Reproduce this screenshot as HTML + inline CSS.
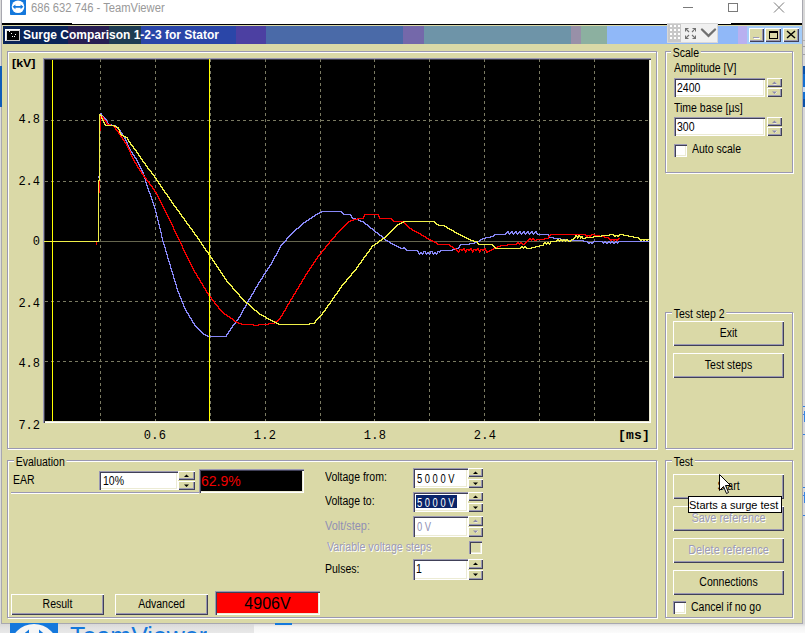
<!DOCTYPE html>
<html><head><meta charset="utf-8"><style>
html,body{margin:0;padding:0;}
body{width:805px;height:633px;overflow:hidden;position:relative;background:#fff;}
body div, body svg{position:absolute;}
.t,.tc,.tb,.m,.mb{white-space:nowrap;font-family:"Liberation Sans",sans-serif;font-size:12px;color:#000;line-height:14px;}
.t{transform:scaleX(0.875);transform-origin:left top;}
.tc{text-align:center;}
.tc{transform:scaleX(0.875);transform-origin:center top;}
.tb{font-weight:bold;}
.m{font-family:"Liberation Mono",monospace;font-size:11px;}
.mb{font-family:"Liberation Mono",monospace;font-size:12px;font-weight:bold;}
</style></head><body>
<div style="left:0px;top:0px;width:805px;height:23px;background:#ffffff;"></div>
<svg style="left:10px;top:0px" width="16" height="15" viewBox="0 0 16 15"><rect x="0" y="-1" width="16" height="16" rx="0.8" fill="#1478dc"/><circle cx="8" cy="6.8" r="6.3" fill="#fff"/><path d="M2.6 6.8 L5.4 4.4 V5.9 H10.6 V4.4 L13.4 6.8 L10.6 9.2 V7.7 H5.4 V9.2 Z" fill="#1478dc"/></svg>
<div class="t" style="left:31px;top:1px;color:#999999;font-size:12px;transform:scaleX(0.935);transform-origin:left top">686 632 746 - TeamViewer</div>
<div style="left:683px;top:7px;width:10px;height:1px;background:#7a7a7a;"></div>
<div style="left:728px;top:3px;width:10px;height:9px;border:1px solid #7a7a7a;box-sizing:border-box"></div>
<svg style="left:773px;top:2px" width="12" height="11" viewBox="0 0 12 11"><path d="M1 0.5 L11 10.5 M11 0.5 L1 10.5" stroke="#7a7a7a" stroke-width="1"/></svg>
<div style="left:0px;top:0px;width:1px;height:633px;background:#dcdcdc;"></div>
<div style="left:1px;top:0px;width:1px;height:624px;background:#a8a8b0;"></div>
<div style="left:0px;top:66px;width:2px;height:41px;background:#0f5cb8;"></div>
<div style="left:802px;top:0px;width:1px;height:624px;background:#a8a8b0;"></div>
<div style="left:803px;top:0px;width:2px;height:633px;background:#d8d8d8;"></div>
<div style="left:803px;top:66px;width:2px;height:41px;background:#0a52a8;"></div>
<div style="left:803px;top:74px;width:2px;height:14px;background:#1270d0;"></div>
<div style="left:803px;top:87px;width:2px;height:5px;background:#c8dcf0;"></div>
<div style="left:803px;top:92px;width:2px;height:7px;background:#1270d0;"></div>
<div style="left:803px;top:46px;width:2px;height:1px;background:#a0a0a0;"></div>
<div style="left:803px;top:54px;width:2px;height:1px;background:#a0a0a0;"></div>
<div style="left:803px;top:40px;width:2px;height:1px;background:#b0b0b0;"></div>
<div style="left:803px;top:406px;width:2px;height:1px;background:#3080e0;"></div>
<div style="left:803px;top:434px;width:2px;height:1px;background:#3080e0;"></div>
<div style="left:803px;top:487px;width:2px;height:1px;background:#3080e0;"></div>
<div style="left:803px;top:515px;width:2px;height:1px;background:#3080e0;"></div>
<div style="left:804px;top:411px;width:1px;height:11px;background:#3a86e0;"></div>
<div style="left:803px;top:414px;width:2px;height:1px;background:#3a86e0;"></div>
<div style="left:804px;top:492px;width:1px;height:11px;background:#3a86e0;"></div>
<div style="left:803px;top:495px;width:2px;height:1px;background:#3a86e0;"></div>
<div style="left:2px;top:23px;width:70px;height:2px;background:#000;"></div>
<div style="left:72px;top:24px;width:659px;height:1px;background:#000;"></div>
<div style="left:731px;top:23px;width:71px;height:2px;background:#000;"></div>
<div style="left:2px;top:25px;width:800px;height:598px;background:#dad9a7;"></div>
<div style="left:1px;top:623px;width:802px;height:1px;background:#a8a8b0;"></div>
<div style="left:3px;top:26px;width:65px;height:18px;background:#0a2458;"></div>
<div style="left:68px;top:26px;width:41px;height:18px;background:#281e52;"></div>
<div style="left:109px;top:26px;width:32px;height:18px;background:#1e3c52;"></div>
<div style="left:141px;top:26px;width:95px;height:18px;background:#2a46a8;"></div>
<div style="left:236px;top:26px;width:30px;height:18px;background:#4c40a2;"></div>
<div style="left:266px;top:26px;width:137px;height:18px;background:#4a6aa8;"></div>
<div style="left:403px;top:26px;width:21px;height:18px;background:#7468aa;"></div>
<div style="left:424px;top:26px;width:147px;height:18px;background:#6e94a8;"></div>
<div style="left:571px;top:26px;width:10px;height:18px;background:#9890a8;"></div>
<div style="left:581px;top:26px;width:26px;height:18px;background:#8cb0a0;"></div>
<div style="left:607px;top:26px;width:131px;height:18px;background:#90b8f8;"></div>
<div style="left:738px;top:26px;width:9px;height:18px;background:#b8b0f0;"></div>
<div style="left:747px;top:26px;width:55px;height:18px;background:#a4ccf8;"></div>
<div style="left:5px;top:29px;width:15px;height:12px;background:#000;box-shadow:inset 1px 1px 0 #fff,inset -1px -1px 0 #c8c8c8,inset 2px 2px 0 #e0e0e0"></div>
<svg style="left:5px;top:29px" width="15" height="12"><g fill="#fff"><rect x="4" y="2" width="1" height="1"/><rect x="6" y="4" width="1" height="1"/><rect x="10" y="5" width="1" height="1"/><rect x="7" y="7" width="1" height="1"/><rect x="9" y="7" width="1" height="1"/></g></svg>
<div class="tb" style="left:23px;top:28px;color:#fff">Surge Comparison 1-2-3 for Stator</div>
<div style="left:667px;top:23px;width:51px;height:20px;background:#d8d8d8;"></div>
<div style="left:668px;top:24px;width:49px;height:18px;background:#f0f0f0;"></div>
<div style="left:668px;top:24px;width:13px;height:18px;background:#c8c8c8;"></div>
<svg style="left:668px;top:24px" width="13" height="18"><g fill="#fff"><rect x="2" y="1" width="2" height="2"/><rect x="2" y="5" width="2" height="2"/><rect x="2" y="9" width="2" height="2"/><rect x="2" y="13" width="2" height="2"/><rect x="6" y="1" width="2" height="2"/><rect x="6" y="5" width="2" height="2"/><rect x="6" y="9" width="2" height="2"/><rect x="6" y="13" width="2" height="2"/><rect x="10" y="1" width="2" height="2"/><rect x="10" y="5" width="2" height="2"/><rect x="10" y="9" width="2" height="2"/><rect x="10" y="13" width="2" height="2"/></g></svg>
<svg style="left:685px;top:28px" width="11" height="11" viewBox="0 0 11 11"><g stroke="#707070" stroke-width="1.1" fill="none"><path d="M0.5 3.5 V0.5 H3.5 M1 1 L4 4"/><path d="M10.5 3.5 V0.5 H7.5 M10 1 L7 4"/><path d="M0.5 7.5 V10.5 H3.5 M1 10 L4 7"/><path d="M10.5 7.5 V10.5 H7.5 M10 10 L7 7"/></g></svg>
<svg style="left:700px;top:28px" width="17" height="10" viewBox="0 0 17 10"><path d="M2 1.5 L8.5 7.8 L15 1.5" stroke="#707070" stroke-width="2.3" fill="none" stroke-linecap="round"/></svg>
<div style="left:749px;top:28px;width:15px;height:14px;background:#dad9a7;box-shadow:inset 1px 1px 0 #ffffff,inset -1px -1px 0 #404058,inset -2px -2px 0 #9a98b2"></div>
<div style="left:765px;top:28px;width:16px;height:14px;background:#dad9a7;box-shadow:inset 1px 1px 0 #ffffff,inset -1px -1px 0 #404058,inset -2px -2px 0 #9a98b2"></div>
<div style="left:783px;top:28px;width:16px;height:14px;background:#dad9a7;box-shadow:inset 1px 1px 0 #ffffff,inset -1px -1px 0 #404058,inset -2px -2px 0 #9a98b2"></div>
<div style="left:754px;top:38px;width:6px;height:1px;background:#fff;"></div>
<div style="left:753px;top:37px;width:6px;height:1px;background:#9c9ab8;"></div>
<div style="left:769px;top:31px;width:9px;height:8px;border:1px solid #000;border-top-width:2px;box-sizing:border-box"></div>
<svg style="left:786px;top:30px" width="10" height="9" viewBox="0 0 10 9"><path d="M1 1 L9 8 M9 1 L1 8" stroke="#000" stroke-width="1.5"/></svg>
<div style="left:8px;top:52px;width:650px;height:398px;border:1px solid #ffffff;box-sizing:border-box"></div>
<div style="left:7px;top:51px;width:650px;height:398px;border:1px solid #9a98b2;box-sizing:border-box"></div>
<div class="tb" style="left:12px;top:57px;color:#000;font-size:11.5px;line-height:13px;transform:scaleX(1.08);transform-origin:left top">[kV]</div>
<div style="left:43px;top:58px;width:608px;height:365px;background:#000;box-shadow:inset 1px 1px 0 #9a98b2,inset 2px 2px 0 #3c3c48,inset -1px -1px 0 #ffffff,inset -2px -2px 0 #ecebd4"></div>
<div class="m" style="left:0px;top:113px;width:40px;text-align:right;font-size:12px">4.8</div>
<div class="m" style="left:0px;top:175px;width:40px;text-align:right;font-size:12px">2.4</div>
<div class="m" style="left:0px;top:235px;width:40px;text-align:right;font-size:12px">0</div>
<div class="m" style="left:0px;top:297px;width:40px;text-align:right;font-size:12px">2.4</div>
<div class="m" style="left:0px;top:357px;width:40px;text-align:right;font-size:12px">4.8</div>
<div class="m" style="left:0px;top:419px;width:40px;text-align:right;font-size:12px">7.2</div>
<div class="m" style="left:135px;top:429px;width:40px;text-align:center;font-size:12px;letter-spacing:0.3px">0.6</div>
<div class="m" style="left:245px;top:429px;width:40px;text-align:center;font-size:12px;letter-spacing:0.3px">1.2</div>
<div class="m" style="left:355px;top:429px;width:40px;text-align:center;font-size:12px;letter-spacing:0.3px">1.8</div>
<div class="m" style="left:465px;top:429px;width:40px;text-align:center;font-size:12px;letter-spacing:0.3px">2.4</div>
<div class="mb" style="left:618px;top:429px;font-size:13px;letter-spacing:0.2px">[ms]</div>
<div style="left:44px;top:59px;width:605px;height:362px;overflow:hidden"><div style="position:absolute;left:-44px;top:-59px"><svg style="left:0;top:0" width="805" height="633"><g stroke="#7a7a62" stroke-width="1" stroke-dasharray="3 3" shape-rendering="crispEdges"><line x1="100.5" y1="59" x2="100.5" y2="421"/><line x1="155.5" y1="59" x2="155.5" y2="421"/><line x1="210.5" y1="59" x2="210.5" y2="421"/><line x1="265.5" y1="59" x2="265.5" y2="421"/><line x1="320.5" y1="59" x2="320.5" y2="421"/><line x1="374.5" y1="59" x2="374.5" y2="421"/><line x1="429.5" y1="59" x2="429.5" y2="421"/><line x1="484.5" y1="59" x2="484.5" y2="421"/><line x1="539.5" y1="59" x2="539.5" y2="421"/><line x1="594.5" y1="59" x2="594.5" y2="421"/><line x1="45" y1="120.5" x2="649" y2="120.5"/><line x1="45" y1="181.5" x2="649" y2="181.5"/><line x1="45" y1="301.5" x2="649" y2="301.5"/><line x1="45" y1="361.5" x2="649" y2="361.5"/></g><line x1="44" y1="241.5" x2="649" y2="241.5" stroke="#66664e" stroke-width="1" shape-rendering="crispEdges"/><path d="M100.5 112.5 V113.5 H101.5 V115.5 V115.5 H102.5 V116.5 V116.5 H103.5 V117.5 V117.5 H104.5 V118.5 V118.5 H105.5 V119.5 V119.5 H106.5 V120.5 V121.5 H107.5 V122.5 V123.5 H108.5 V124.5 H109.5 H110.5 V124.5 H111.5 V125.5 H112.5 H113.5 H114.5 V125.5 H115.5 V126.5 V126.5 H116.5 V127.5 V127.5 H117.5 V128.5 V128.5 H118.5 V129.5 V129.5 H119.5 V130.5 V130.5 H120.5 V131.5 V132.5 H121.5 V133.5 V133.5 H122.5 V134.5 V135.5 H123.5 V136.5 V136.5 H124.5 V137.5 V138.5 H125.5 V139.5 V140.5 H126.5 V141.5 V142.5 H127.5 V144.5 V145.5 H128.5 V146.5 V147.5 H129.5 V148.5 V149.5 H130.5 V151.5 V151.5 H131.5 V152.5 V152.5 H132.5 V153.5 V154.5 H133.5 V155.5 V155.5 H134.5 V156.5 V157.5 H135.5 V158.5 V158.5 H136.5 V159.5 V160.5 H137.5 V161.5 V162.5 H138.5 V163.5 V164.5 H139.5 V165.5 V166.5 H140.5 V167.5 V168.5 H141.5 V169.5 V170.5 H142.5 V171.5 V172.5 H143.5 V173.5 V175.5 H144.5 V177.5 V178.5 H145.5 V180.5 V182.5 H146.5 V184.5 V185.5 H147.5 V187.5 V188.5 H148.5 V190.5 V191.5 H149.5 V192.5 V193.5 H150.5 V195.5 V196.5 H151.5 V198.5 V199.5 H152.5 V201.5 V202.5 H153.5 V204.5 V205.5 H154.5 V206.5 V208.5 H155.5 V210.5 V212.5 H156.5 V214.5 V216.5 H157.5 V218.5 V220.5 H158.5 V222.5 V224.5 H159.5 V226.5 V228.5 H160.5 V230.5 V232.5 H161.5 V235.5 V237.5 H162.5 V239.5 V241.5 H163.5 V243.5 V244.5 H164.5 V246.5 V247.5 H165.5 V249.5 V251.5 H166.5 V253.5 V254.5 H167.5 V256.5 V258.5 H168.5 V260.5 V261.5 H169.5 V263.5 V264.5 H170.5 V266.5 V268.5 H171.5 V270.5 V271.5 H172.5 V273.5 V274.5 H173.5 V276.5 V278.5 H174.5 V280.5 V281.5 H175.5 V283.5 V284.5 H176.5 V286.5 V288.5 H177.5 V290.5 V291.5 H178.5 V292.5 V293.5 H179.5 V295.5 V296.5 H180.5 V297.5 V298.5 H181.5 V300.5 V301.5 H182.5 V302.5 V303.5 H183.5 V305.5 V306.5 H184.5 V307.5 V308.5 H185.5 V309.5 V310.5 H186.5 V311.5 V312.5 H187.5 V313.5 V313.5 H188.5 V314.5 V315.5 H189.5 V316.5 V317.5 H190.5 V318.5 V318.5 H191.5 V319.5 V320.5 H192.5 V321.5 V322.5 H193.5 V323.5 V323.5 H194.5 V324.5 V325.5 H195.5 V326.5 V326.5 H196.5 V327.5 V327.5 H197.5 V328.5 V328.5 H198.5 V329.5 V329.5 H199.5 V330.5 V330.5 H200.5 V331.5 V331.5 H201.5 V332.5 V332.5 H202.5 V333.5 V333.5 H203.5 V334.5 H204.5 V334.5 H205.5 V335.5 H206.5 V335.5 H207.5 V336.5 H208.5 H209.5 H210.5 H211.5 H212.5 H213.5 H214.5 H215.5 H216.5 H217.5 H218.5 H219.5 H220.5 H221.5 H222.5 H223.5 H224.5 H225.5 V336.5 H226.5 V335.5 V334.5 H227.5 V333.5 V333.5 H228.5 V332.5 V331.5 H229.5 V330.5 V330.5 H230.5 V329.5 V328.5 H231.5 V327.5 V327.5 H232.5 V326.5 V325.5 H233.5 V324.5 V324.5 H234.5 V323.5 V323.5 H235.5 V322.5 V321.5 H236.5 V320.5 V320.5 H237.5 V319.5 V319.5 H238.5 V318.5 V317.5 H239.5 V316.5 V316.5 H240.5 V315.5 V314.5 H241.5 V313.5 V312.5 H242.5 V311.5 V310.5 H243.5 V309.5 V308.5 H244.5 V307.5 V307.5 H245.5 V306.5 V305.5 H246.5 V304.5 V303.5 H247.5 V302.5 V301.5 H248.5 V300.5 V299.5 H249.5 V298.5 V298.5 H250.5 V297.5 V296.5 H251.5 V295.5 V294.5 H252.5 V293.5 V293.5 H253.5 V292.5 V291.5 H254.5 V290.5 V289.5 H255.5 V288.5 V287.5 H256.5 V286.5 V286.5 H257.5 V285.5 V284.5 H258.5 V283.5 V282.5 H259.5 V281.5 V281.5 H260.5 V280.5 V279.5 H261.5 V278.5 V278.5 H262.5 V277.5 V276.5 H263.5 V275.5 V274.5 H264.5 V273.5 V273.5 H265.5 V272.5 V271.5 H266.5 V270.5 V270.5 H267.5 V269.5 V268.5 H268.5 V267.5 V267.5 H269.5 V266.5 V265.5 H270.5 V264.5 V264.5 H271.5 V263.5 V262.5 H272.5 V261.5 V260.5 H273.5 V259.5 V258.5 H274.5 V257.5 V256.5 H275.5 V255.5 V255.5 H276.5 V254.5 V253.5 H277.5 V252.5 V251.5 H278.5 V250.5 V249.5 H279.5 V248.5 V247.5 H280.5 V246.5 V245.5 H281.5 V244.5 V244.5 H282.5 V243.5 V243.5 H283.5 V242.5 V242.5 H284.5 V241.5 V241.5 H285.5 V240.5 V240.5 H286.5 V239.5 V238.5 H287.5 V237.5 V237.5 H288.5 V236.5 V236.5 H289.5 V235.5 V235.5 H290.5 V234.5 V234.5 H291.5 V233.5 V233.5 H292.5 V232.5 V232.5 H293.5 V231.5 V231.5 H294.5 V230.5 V230.5 H295.5 V229.5 V229.5 H296.5 V228.5 H297.5 V228.5 H298.5 V227.5 V227.5 H299.5 V226.5 V226.5 H300.5 V225.5 V225.5 H301.5 V224.5 V224.5 H302.5 V223.5 V223.5 H303.5 V222.5 H304.5 V222.5 H305.5 V221.5 V221.5 H306.5 V220.5 H307.5 V220.5 H308.5 V219.5 V219.5 H309.5 V218.5 H310.5 V218.5 H311.5 V217.5 V217.5 H312.5 V216.5 H313.5 V216.5 H314.5 V215.5 V215.5 H315.5 V214.5 H316.5 V214.5 H317.5 V213.5 H318.5 V213.5 H319.5 V212.5 H320.5 V212.5 H321.5 V211.5 H322.5 H323.5 H324.5 H325.5 H326.5 H327.5 H328.5 H329.5 H330.5 H331.5 H332.5 H333.5 H334.5 H335.5 H336.5 H337.5 H338.5 H339.5 H340.5 V211.5 H341.5 V212.5 V212.5 H342.5 V213.5 V213.5 H343.5 V214.5 H344.5 H345.5 H346.5 H347.5 H348.5 H349.5 H350.5 V215.5 H351.5 V216.5 V217.5 H352.5 V218.5 H353.5 H354.5 V218.5 H355.5 V219.5 H356.5 H357.5 V219.5 H358.5 V220.5 H359.5 V220.5 H360.5 V221.5 H361.5 H362.5 V221.5 H363.5 V222.5 V222.5 H364.5 V223.5 V223.5 H365.5 V224.5 H366.5 V224.5 H367.5 V225.5 V225.5 H368.5 V226.5 V226.5 H369.5 V227.5 V227.5 H370.5 V228.5 H371.5 V228.5 H372.5 V229.5 V229.5 H373.5 V230.5 V230.5 H374.5 V231.5 V231.5 H375.5 V232.5 H376.5 V232.5 H377.5 V233.5 V233.5 H378.5 V234.5 V234.5 H379.5 V235.5 H380.5 V235.5 H381.5 V236.5 V236.5 H382.5 V237.5 V237.5 H383.5 V238.5 V238.5 H384.5 V239.5 V239.5 H385.5 V240.5 H386.5 V240.5 H387.5 V241.5 H388.5 V241.5 H389.5 V242.5 V242.5 H390.5 V243.5 H391.5 V243.5 H392.5 V244.5 H393.5 V244.5 H394.5 V245.5 H395.5 V245.5 H396.5 V246.5 H397.5 V246.5 H398.5 V247.5 H399.5 V247.5 H400.5 V248.5 H401.5 H402.5 V248.5 H403.5 V247.5 H404.5 V248.5 H405.5 V249.5 V249.5 H406.5 V250.5 H407.5 H408.5 H409.5 H410.5 H411.5 H412.5 H413.5 H414.5 H415.5 H416.5 H417.5 V251.5 H418.5 V252.5 V253.5 H419.5 V254.5 V253.5 H420.5 V252.5 H421.5 V253.5 H422.5 V254.5 V253.5 H423.5 V252.5 V251.5 H424.5 V250.5 V251.5 H425.5 V252.5 V253.5 H426.5 V254.5 V253.5 H427.5 V252.5 H428.5 V253.5 H429.5 V254.5 V253.5 H430.5 V252.5 V251.5 H431.5 V250.5 V251.5 H432.5 V252.5 V253.5 H433.5 V254.5 V253.5 H434.5 V252.5 H435.5 V253.5 H436.5 V254.5 V253.5 H437.5 V252.5 V251.5 H438.5 V250.5 V251.5 H439.5 V252.5 V251.5 H440.5 V250.5 H441.5 H442.5 H443.5 H444.5 H445.5 H446.5 H447.5 H448.5 H449.5 H450.5 H451.5 V250.5 H452.5 V249.5 H453.5 H454.5 V249.5 H455.5 V248.5 H456.5 H457.5 V248.5 H458.5 V247.5 V247.5 H459.5 V246.5 V245.5 H460.5 V244.5 H461.5 H462.5 H463.5 H464.5 H465.5 H466.5 H467.5 H468.5 V244.5 H469.5 V243.5 H470.5 H471.5 H472.5 H473.5 V243.5 H474.5 V242.5 H475.5 H476.5 V242.5 H477.5 V241.5 H478.5 V241.5 H479.5 V240.5 V240.5 H480.5 V239.5 H481.5 V239.5 H482.5 V238.5 H483.5 H484.5 V238.5 H485.5 V237.5 H486.5 H487.5 H488.5 H489.5 V237.5 H490.5 V236.5 H491.5 H492.5 V236.5 H493.5 V235.5 V235.5 H494.5 V234.5 H495.5 H496.5 H497.5 H498.5 H499.5 H500.5 H501.5 H502.5 H503.5 H504.5 H505.5 V233.5 H506.5 V232.5 V232.5 H507.5 V231.5 V231.5 H508.5 V232.5 V233.5 H509.5 V234.5 V233.5 H510.5 V232.5 V232.5 H511.5 V231.5 V231.5 H512.5 V232.5 V233.5 H513.5 V234.5 V233.5 H514.5 V232.5 V232.5 H515.5 V231.5 V231.5 H516.5 V232.5 V233.5 H517.5 V234.5 V233.5 H518.5 V232.5 V232.5 H519.5 V231.5 V231.5 H520.5 V232.5 V233.5 H521.5 V234.5 V233.5 H522.5 V232.5 V232.5 H523.5 V231.5 V231.5 H524.5 V232.5 V233.5 H525.5 V234.5 V233.5 H526.5 V232.5 V232.5 H527.5 V231.5 V231.5 H528.5 V232.5 V233.5 H529.5 V234.5 V233.5 H530.5 V232.5 V232.5 H531.5 V231.5 V231.5 H532.5 V232.5 V233.5 H533.5 V234.5 V233.5 H534.5 V232.5 V232.5 H535.5 V231.5 V231.5 H536.5 V232.5 V233.5 H537.5 V234.5 H538.5 H539.5 H540.5 H541.5 H542.5 H543.5 H544.5 H545.5 H546.5 H547.5 V234.5 H548.5 V235.5 V236.5 H549.5 V237.5 H550.5 H551.5 H552.5 V237.5 H553.5 V238.5 H554.5 H555.5 H556.5 H557.5 H558.5 H559.5 V238.5 H560.5 V239.5 H561.5 H562.5 H563.5 H564.5 V239.5 H565.5 V240.5 H566.5 H567.5 H568.5 H569.5 H570.5 H571.5 H572.5 H573.5 H574.5 H575.5 H576.5 H577.5 H578.5 H579.5 H580.5 H581.5 H582.5 V240.5 H583.5 V241.5 H584.5 H585.5 H586.5 H587.5 V242.5 H588.5 V243.5 H589.5 V242.5 H590.5 V241.5 V242.5 H591.5 V243.5 H592.5 V242.5 H593.5 V241.5 H594.5 H595.5 H596.5 H597.5 H598.5 H599.5 H600.5 H601.5 V241.5 H602.5 V242.5 V242.5 H603.5 V243.5 V242.5 H604.5 V241.5 H605.5 V242.5 H606.5 V243.5 V243.5 H607.5 V242.5 V242.5 H608.5 V241.5 V241.5 H609.5 V242.5 V242.5 H610.5 V243.5 V242.5 H611.5 V241.5 H612.5 V242.5 H613.5 V243.5 V243.5 H614.5 V242.5 V242.5 H615.5 V241.5 V241.5 H616.5 V242.5 V242.5 H617.5 V243.5 V242.5 H618.5 V241.5 H619.5 H620.5 H621.5 H622.5 H623.5 H624.5 H625.5 H626.5 H627.5 H628.5 H629.5 H630.5 H631.5 H632.5 H633.5 H634.5 H635.5 H636.5 H637.5 H638.5 H639.5 H640.5 H641.5 H642.5 H643.5 H644.5 H645.5 H646.5 H647.5 H648.5" fill="none" stroke="#8888f8" stroke-width="1" shape-rendering="crispEdges"/><path d="M100.5 116.5 H101.5 V116.5 H102.5 V117.5 V117.5 H103.5 V118.5 V119.5 H104.5 V120.5 V120.5 H105.5 V121.5 V121.5 H106.5 V122.5 V123.5 H107.5 V124.5 H108.5 H109.5 V124.5 H110.5 V125.5 H111.5 H112.5 H113.5 V126.5 H114.5 V127.5 V127.5 H115.5 V128.5 V129.5 H116.5 V130.5 V130.5 H117.5 V131.5 V131.5 H118.5 V132.5 V133.5 H119.5 V134.5 V134.5 H120.5 V135.5 V136.5 H121.5 V137.5 V137.5 H122.5 V138.5 V139.5 H123.5 V140.5 V140.5 H124.5 V141.5 V142.5 H125.5 V143.5 V143.5 H126.5 V144.5 V145.5 H127.5 V146.5 V147.5 H128.5 V148.5 V149.5 H129.5 V150.5 V151.5 H130.5 V153.5 V154.5 H131.5 V155.5 V156.5 H132.5 V157.5 V158.5 H133.5 V159.5 V160.5 H134.5 V161.5 V162.5 H135.5 V163.5 V163.5 H136.5 V164.5 V165.5 H137.5 V166.5 V167.5 H138.5 V168.5 V168.5 H139.5 V169.5 V170.5 H140.5 V171.5 V171.5 H141.5 V172.5 V173.5 H142.5 V174.5 V174.5 H143.5 V175.5 V176.5 H144.5 V177.5 V177.5 H145.5 V178.5 V178.5 H146.5 V179.5 V180.5 H147.5 V181.5 V181.5 H148.5 V182.5 V182.5 H149.5 V183.5 V184.5 H150.5 V185.5 V185.5 H151.5 V186.5 V186.5 H152.5 V187.5 V188.5 H153.5 V189.5 V189.5 H154.5 V190.5 V191.5 H155.5 V192.5 V192.5 H156.5 V193.5 V194.5 H157.5 V195.5 V196.5 H158.5 V197.5 V198.5 H159.5 V199.5 V200.5 H160.5 V201.5 V202.5 H161.5 V203.5 V204.5 H162.5 V205.5 V206.5 H163.5 V207.5 V208.5 H164.5 V209.5 V210.5 H165.5 V211.5 V212.5 H166.5 V213.5 V214.5 H167.5 V215.5 V216.5 H168.5 V217.5 V218.5 H169.5 V219.5 V220.5 H170.5 V221.5 V222.5 H171.5 V223.5 V224.5 H172.5 V225.5 V226.5 H173.5 V228.5 V229.5 H174.5 V230.5 V231.5 H175.5 V232.5 V233.5 H176.5 V234.5 V235.5 H177.5 V236.5 V237.5 H178.5 V238.5 V239.5 H179.5 V240.5 V241.5 H180.5 V242.5 V243.5 H181.5 V244.5 V245.5 H182.5 V247.5 V248.5 H183.5 V249.5 V250.5 H184.5 V251.5 V252.5 H185.5 V253.5 V254.5 H186.5 V255.5 V256.5 H187.5 V257.5 V258.5 H188.5 V259.5 V260.5 H189.5 V261.5 V262.5 H190.5 V263.5 V264.5 H191.5 V265.5 V266.5 H192.5 V267.5 V268.5 H193.5 V269.5 V270.5 H194.5 V271.5 V272.5 H195.5 V273.5 V273.5 H196.5 V274.5 V275.5 H197.5 V276.5 V277.5 H198.5 V278.5 V278.5 H199.5 V279.5 V280.5 H200.5 V281.5 V282.5 H201.5 V283.5 V283.5 H202.5 V284.5 V285.5 H203.5 V286.5 V287.5 H204.5 V288.5 V288.5 H205.5 V289.5 V290.5 H206.5 V291.5 V292.5 H207.5 V293.5 V293.5 H208.5 V294.5 V295.5 H209.5 V296.5 V296.5 H210.5 V297.5 V297.5 H211.5 V298.5 V299.5 H212.5 V300.5 V300.5 H213.5 V301.5 V301.5 H214.5 V302.5 V303.5 H215.5 V304.5 V304.5 H216.5 V305.5 V305.5 H217.5 V306.5 V306.5 H218.5 V307.5 V308.5 H219.5 V309.5 V309.5 H220.5 V310.5 V310.5 H221.5 V311.5 V311.5 H222.5 V312.5 V312.5 H223.5 V313.5 V313.5 H224.5 V314.5 H225.5 V314.5 H226.5 V315.5 V315.5 H227.5 V316.5 H228.5 V316.5 H229.5 V317.5 V317.5 H230.5 V318.5 H231.5 V318.5 H232.5 V319.5 V319.5 H233.5 V320.5 V320.5 H234.5 V321.5 H235.5 V321.5 H236.5 V322.5 H237.5 V322.5 H238.5 V323.5 H239.5 H240.5 V323.5 H241.5 V324.5 H242.5 H243.5 H244.5 H245.5 H246.5 H247.5 H248.5 H249.5 H250.5 H251.5 H252.5 V324.5 H253.5 V325.5 H254.5 H255.5 H256.5 H257.5 V325.5 H258.5 V324.5 H259.5 H260.5 H261.5 H262.5 H263.5 H264.5 H265.5 H266.5 H267.5 V324.5 H268.5 V323.5 H269.5 H270.5 H271.5 H272.5 H273.5 V323.5 H274.5 V322.5 V322.5 H275.5 V321.5 H276.5 V321.5 H277.5 V320.5 V320.5 H278.5 V319.5 V319.5 H279.5 V318.5 V318.5 H280.5 V317.5 V316.5 H281.5 V315.5 V315.5 H282.5 V314.5 V313.5 H283.5 V312.5 V311.5 H284.5 V310.5 V310.5 H285.5 V309.5 V308.5 H286.5 V307.5 V306.5 H287.5 V305.5 V304.5 H288.5 V303.5 V303.5 H289.5 V302.5 V301.5 H290.5 V300.5 V299.5 H291.5 V298.5 V298.5 H292.5 V297.5 V296.5 H293.5 V295.5 V294.5 H294.5 V293.5 V293.5 H295.5 V292.5 V291.5 H296.5 V290.5 V289.5 H297.5 V288.5 V288.5 H298.5 V287.5 V286.5 H299.5 V285.5 V284.5 H300.5 V283.5 V283.5 H301.5 V282.5 V281.5 H302.5 V280.5 V279.5 H303.5 V278.5 V278.5 H304.5 V277.5 V276.5 H305.5 V275.5 V274.5 H306.5 V273.5 V273.5 H307.5 V272.5 V271.5 H308.5 V270.5 V270.5 H309.5 V269.5 V268.5 H310.5 V267.5 V267.5 H311.5 V266.5 V265.5 H312.5 V264.5 V264.5 H313.5 V263.5 V262.5 H314.5 V261.5 V261.5 H315.5 V260.5 V259.5 H316.5 V258.5 V258.5 H317.5 V257.5 V256.5 H318.5 V255.5 V255.5 H319.5 V254.5 V254.5 H320.5 V253.5 V253.5 H321.5 V252.5 V251.5 H322.5 V250.5 V250.5 H323.5 V249.5 V249.5 H324.5 V248.5 V248.5 H325.5 V247.5 V246.5 H326.5 V245.5 V245.5 H327.5 V244.5 V244.5 H328.5 V243.5 V243.5 H329.5 V242.5 V241.5 H330.5 V240.5 V240.5 H331.5 V239.5 V239.5 H332.5 V238.5 V238.5 H333.5 V237.5 V237.5 H334.5 V236.5 V236.5 H335.5 V235.5 V234.5 H336.5 V233.5 V233.5 H337.5 V232.5 V232.5 H338.5 V231.5 V231.5 H339.5 V230.5 V230.5 H340.5 V229.5 V229.5 H341.5 V228.5 V228.5 H342.5 V227.5 V227.5 H343.5 V226.5 V226.5 H344.5 V225.5 V225.5 H345.5 V224.5 V224.5 H346.5 V223.5 V223.5 H347.5 V222.5 V222.5 H348.5 V221.5 H349.5 V221.5 H350.5 V220.5 H351.5 H352.5 V220.5 H353.5 V219.5 H354.5 H355.5 H356.5 V219.5 H357.5 V218.5 H358.5 H359.5 H360.5 H361.5 H362.5 V218.5 H363.5 V217.5 V216.5 H364.5 V214.5 H365.5 H366.5 H367.5 H368.5 H369.5 H370.5 H371.5 H372.5 H373.5 H374.5 H375.5 H376.5 H377.5 V214.5 H378.5 V215.5 V216.5 H379.5 V218.5 H380.5 H381.5 H382.5 H383.5 H384.5 H385.5 H386.5 H387.5 H388.5 H389.5 H390.5 H391.5 V219.5 H392.5 V220.5 V220.5 H393.5 V221.5 H394.5 H395.5 H396.5 H397.5 H398.5 H399.5 H400.5 H401.5 V221.5 H402.5 V222.5 H403.5 V222.5 H404.5 V223.5 V223.5 H405.5 V224.5 V224.5 H406.5 V225.5 V225.5 H407.5 V226.5 V226.5 H408.5 V227.5 V227.5 H409.5 V228.5 H410.5 V228.5 H411.5 V229.5 V229.5 H412.5 V230.5 H413.5 V230.5 H414.5 V231.5 H415.5 V231.5 H416.5 V232.5 H417.5 V232.5 H418.5 V233.5 H419.5 V233.5 H420.5 V234.5 V234.5 H421.5 V235.5 H422.5 V235.5 H423.5 V236.5 H424.5 V236.5 H425.5 V237.5 V237.5 H426.5 V238.5 H427.5 V238.5 H428.5 V239.5 H429.5 V239.5 H430.5 V240.5 H431.5 V240.5 H432.5 V241.5 H433.5 V241.5 H434.5 V242.5 H435.5 V242.5 H436.5 V243.5 V243.5 H437.5 V244.5 H438.5 H439.5 H440.5 H441.5 H442.5 H443.5 H444.5 H445.5 H446.5 H447.5 H448.5 V244.5 H449.5 V245.5 V245.5 H450.5 V246.5 H451.5 V246.5 H452.5 V247.5 V247.5 H453.5 V248.5 H454.5 V248.5 H455.5 V249.5 V249.5 H456.5 V250.5 V250.5 H457.5 V251.5 V251.5 H458.5 V252.5 V251.5 H459.5 V249.5 V249.5 H460.5 V248.5 V249.5 H461.5 V250.5 H462.5 V249.5 H463.5 V248.5 V248.5 H464.5 V249.5 V250.5 H465.5 V252.5 V251.5 H466.5 V249.5 V249.5 H467.5 V248.5 V249.5 H468.5 V250.5 H469.5 V249.5 H470.5 V248.5 V248.5 H471.5 V249.5 V250.5 H472.5 V252.5 V251.5 H473.5 V249.5 V249.5 H474.5 V248.5 V249.5 H475.5 V250.5 H476.5 V249.5 H477.5 V248.5 V248.5 H478.5 V249.5 V250.5 H479.5 V252.5 V251.5 H480.5 V249.5 V249.5 H481.5 V248.5 V249.5 H482.5 V250.5 H483.5 V249.5 H484.5 V248.5 V248.5 H485.5 V249.5 V250.5 H486.5 V252.5 V252.5 H487.5 V251.5 H488.5 V251.5 H489.5 V250.5 H490.5 V250.5 H491.5 V249.5 H492.5 V249.5 H493.5 V248.5 H494.5 V248.5 H495.5 V247.5 H496.5 V247.5 H497.5 V246.5 H498.5 H499.5 V246.5 H500.5 V245.5 H501.5 H502.5 H503.5 H504.5 H505.5 H506.5 V245.5 H507.5 V244.5 H508.5 H509.5 H510.5 H511.5 H512.5 H513.5 H514.5 H515.5 H516.5 V243.5 H517.5 V242.5 H518.5 V243.5 H519.5 V244.5 V243.5 H520.5 V242.5 H521.5 V243.5 H522.5 V244.5 H523.5 V244.5 H524.5 V243.5 V243.5 H525.5 V242.5 V242.5 H526.5 V241.5 V241.5 H527.5 V240.5 H528.5 V239.5 H529.5 V238.5 H530.5 V239.5 H531.5 V240.5 V239.5 H532.5 V238.5 H533.5 V239.5 H534.5 V240.5 H535.5 V240.5 H536.5 V239.5 H537.5 H538.5 H539.5 H540.5 H541.5 H542.5 H543.5 V239.5 H544.5 V238.5 H545.5 H546.5 H547.5 V238.5 H548.5 V237.5 V236.5 H549.5 V235.5 V235.5 H550.5 V234.5 H551.5 H552.5 H553.5 H554.5 H555.5 H556.5 H557.5 H558.5 H559.5 H560.5 H561.5 H562.5 H563.5 H564.5 H565.5 H566.5 H567.5 H568.5 H569.5 H570.5 H571.5 H572.5 H573.5 H574.5 H575.5 H576.5 H577.5 H578.5 H579.5 H580.5 H581.5 H582.5 H583.5 H584.5 H585.5 V235.5 H586.5 V236.5 H587.5 V235.5 H588.5 V234.5 V235.5 H589.5 V236.5 H590.5 V235.5 H591.5 V234.5 H592.5 H593.5 V234.5 H594.5 V235.5 H595.5 H596.5 H597.5 H598.5 V235.5 H599.5 V236.5 H600.5 H601.5 H602.5 H603.5 V236.5 H604.5 V237.5 H605.5 H606.5 H607.5 V237.5 H608.5 V238.5 H609.5 V239.5 H610.5 V240.5 H611.5 V239.5 H612.5 V238.5 V239.5 H613.5 V240.5 H614.5 V239.5 H615.5 V238.5 V239.5 H616.5 V240.5 H617.5 V239.5 H618.5 V238.5 H619.5" fill="none" stroke="#f80000" stroke-width="1" shape-rendering="crispEdges"/><g shape-rendering="crispEdges"><line x1="99.5" y1="177" x2="99.5" y2="193" stroke="#f00000"/><line x1="100.5" y1="116" x2="100.5" y2="131" stroke="#f00000"/><line x1="96.5" y1="242" x2="96.5" y2="245" stroke="#f00000"/><rect x="98" y="176" width="1" height="2" fill="#8c8cf0"/></g><g stroke="#f0f048" shape-rendering="crispEdges"><line x1="44" y1="241.5" x2="99" y2="241.5"/><path d="M98.5 242 V180 H99.5 V114" fill="none"/></g><path d="M99.5 114.5 H100.5 V115.5 H101.5 V117.5 V118.5 H102.5 V119.5 V120.5 H103.5 V121.5 V122.5 H104.5 V124.5 V124.5 H105.5 V125.5 H106.5 H107.5 H108.5 H109.5 H110.5 H111.5 H112.5 H113.5 V125.5 H114.5 V126.5 H115.5 V126.5 H116.5 V127.5 H117.5 V127.5 H118.5 V128.5 V129.5 H119.5 V131.5 V132.5 H120.5 V134.5 V134.5 H121.5 V135.5 H122.5 V135.5 H123.5 V136.5 H124.5 V136.5 H125.5 V137.5 H126.5 V137.5 H127.5 V138.5 V139.5 H128.5 V140.5 V141.5 H129.5 V142.5 V142.5 H130.5 V143.5 V144.5 H131.5 V145.5 V145.5 H132.5 V146.5 V146.5 H133.5 V147.5 V148.5 H134.5 V149.5 V149.5 H135.5 V150.5 V150.5 H136.5 V151.5 V152.5 H137.5 V153.5 V153.5 H138.5 V154.5 V155.5 H139.5 V156.5 V156.5 H140.5 V157.5 V158.5 H141.5 V159.5 V159.5 H142.5 V160.5 V161.5 H143.5 V162.5 V162.5 H144.5 V163.5 V163.5 H145.5 V164.5 V165.5 H146.5 V166.5 V166.5 H147.5 V167.5 V168.5 H148.5 V169.5 V169.5 H149.5 V170.5 V170.5 H150.5 V171.5 V171.5 H151.5 V172.5 V173.5 H152.5 V174.5 V174.5 H153.5 V175.5 V175.5 H154.5 V176.5 V177.5 H155.5 V178.5 V178.5 H156.5 V179.5 V180.5 H157.5 V181.5 V181.5 H158.5 V182.5 V183.5 H159.5 V184.5 V184.5 H160.5 V185.5 V186.5 H161.5 V187.5 V187.5 H162.5 V188.5 V189.5 H163.5 V190.5 V190.5 H164.5 V191.5 V192.5 H165.5 V193.5 V193.5 H166.5 V194.5 V194.5 H167.5 V195.5 V196.5 H168.5 V197.5 V197.5 H169.5 V198.5 V199.5 H170.5 V200.5 V200.5 H171.5 V201.5 V202.5 H172.5 V203.5 V203.5 H173.5 V204.5 V205.5 H174.5 V206.5 V206.5 H175.5 V207.5 V207.5 H176.5 V208.5 V209.5 H177.5 V210.5 V210.5 H178.5 V211.5 V211.5 H179.5 V212.5 V213.5 H180.5 V214.5 V214.5 H181.5 V215.5 V216.5 H182.5 V217.5 V217.5 H183.5 V218.5 V218.5 H184.5 V219.5 V220.5 H185.5 V221.5 V221.5 H186.5 V222.5 V223.5 H187.5 V224.5 V224.5 H188.5 V225.5 V225.5 H189.5 V226.5 V227.5 H190.5 V228.5 V228.5 H191.5 V229.5 V229.5 H192.5 V230.5 V231.5 H193.5 V232.5 V232.5 H194.5 V233.5 V234.5 H195.5 V235.5 V235.5 H196.5 V236.5 V236.5 H197.5 V237.5 V238.5 H198.5 V239.5 V239.5 H199.5 V240.5 V241.5 H200.5 V242.5 V242.5 H201.5 V243.5 V244.5 H202.5 V245.5 V245.5 H203.5 V246.5 V247.5 H204.5 V248.5 V248.5 H205.5 V249.5 V250.5 H206.5 V251.5 V251.5 H207.5 V252.5 V252.5 H208.5 V253.5 V254.5 H209.5 V255.5 V255.5 H210.5 V256.5 V257.5 H211.5 V258.5 V258.5 H212.5 V259.5 V260.5 H213.5 V261.5 V261.5 H214.5 V262.5 V263.5 H215.5 V264.5 V264.5 H216.5 V265.5 V266.5 H217.5 V267.5 V267.5 H218.5 V268.5 V269.5 H219.5 V270.5 V270.5 H220.5 V271.5 V272.5 H221.5 V273.5 V273.5 H222.5 V274.5 V275.5 H223.5 V276.5 V276.5 H224.5 V277.5 V278.5 H225.5 V279.5 V279.5 H226.5 V280.5 V281.5 H227.5 V282.5 V282.5 H228.5 V283.5 V283.5 H229.5 V284.5 V284.5 H230.5 V285.5 V285.5 H231.5 V286.5 V286.5 H232.5 V287.5 V288.5 H233.5 V289.5 V289.5 H234.5 V290.5 V290.5 H235.5 V291.5 V291.5 H236.5 V292.5 V292.5 H237.5 V293.5 V293.5 H238.5 V294.5 V294.5 H239.5 V295.5 V296.5 H240.5 V297.5 V297.5 H241.5 V298.5 V298.5 H242.5 V299.5 V299.5 H243.5 V300.5 V300.5 H244.5 V301.5 V301.5 H245.5 V302.5 V302.5 H246.5 V303.5 H247.5 V303.5 H248.5 V304.5 V304.5 H249.5 V305.5 V305.5 H250.5 V306.5 V306.5 H251.5 V307.5 V307.5 H252.5 V308.5 V308.5 H253.5 V309.5 V309.5 H254.5 V310.5 H255.5 V310.5 H256.5 V311.5 V311.5 H257.5 V312.5 V312.5 H258.5 V313.5 V313.5 H259.5 V314.5 H260.5 V314.5 H261.5 V315.5 H262.5 V315.5 H263.5 V316.5 H264.5 V316.5 H265.5 V317.5 V317.5 H266.5 V318.5 H267.5 V318.5 H268.5 V319.5 H269.5 V319.5 H270.5 V320.5 H271.5 V320.5 H272.5 V321.5 H273.5 V321.5 H274.5 V322.5 H275.5 V322.5 H276.5 V323.5 H277.5 V323.5 H278.5 V324.5 H279.5 H280.5 H281.5 H282.5 H283.5 H284.5 H285.5 H286.5 H287.5 H288.5 H289.5 H290.5 H291.5 H292.5 H293.5 H294.5 H295.5 H296.5 H297.5 H298.5 H299.5 H300.5 H301.5 H302.5 H303.5 H304.5 H305.5 H306.5 H307.5 H308.5 V324.5 H309.5 V323.5 H310.5 H311.5 H312.5 H313.5 V323.5 H314.5 V322.5 V322.5 H315.5 V321.5 V320.5 H316.5 V319.5 V319.5 H317.5 V318.5 V318.5 H318.5 V317.5 V317.5 H319.5 V316.5 V316.5 H320.5 V315.5 V315.5 H321.5 V314.5 V314.5 H322.5 V313.5 V312.5 H323.5 V311.5 V311.5 H324.5 V310.5 V310.5 H325.5 V309.5 V308.5 H326.5 V307.5 V307.5 H327.5 V306.5 V305.5 H328.5 V304.5 V304.5 H329.5 V303.5 V303.5 H330.5 V302.5 V301.5 H331.5 V300.5 V300.5 H332.5 V299.5 V298.5 H333.5 V297.5 V297.5 H334.5 V296.5 V295.5 H335.5 V294.5 V294.5 H336.5 V293.5 V293.5 H337.5 V292.5 V291.5 H338.5 V290.5 V290.5 H339.5 V289.5 V288.5 H340.5 V287.5 V287.5 H341.5 V286.5 V285.5 H342.5 V284.5 V284.5 H343.5 V283.5 V283.5 H344.5 V282.5 V282.5 H345.5 V281.5 V281.5 H346.5 V280.5 V279.5 H347.5 V278.5 V278.5 H348.5 V277.5 V277.5 H349.5 V276.5 V276.5 H350.5 V275.5 V275.5 H351.5 V274.5 V273.5 H352.5 V272.5 V272.5 H353.5 V271.5 V271.5 H354.5 V270.5 V270.5 H355.5 V269.5 V269.5 H356.5 V268.5 V267.5 H357.5 V266.5 V266.5 H358.5 V265.5 V264.5 H359.5 V263.5 V263.5 H360.5 V262.5 V262.5 H361.5 V261.5 V260.5 H362.5 V259.5 V259.5 H363.5 V258.5 V257.5 H364.5 V256.5 V256.5 H365.5 V255.5 V255.5 H366.5 V254.5 V253.5 H367.5 V252.5 V252.5 H368.5 V251.5 V251.5 H369.5 V250.5 V249.5 H370.5 V248.5 V248.5 H371.5 V247.5 V246.5 H372.5 V245.5 H373.5 V245.5 H374.5 V244.5 V244.5 H375.5 V243.5 H376.5 V243.5 H377.5 V242.5 V242.5 H378.5 V241.5 V241.5 H379.5 V240.5 H380.5 V240.5 H381.5 V239.5 V239.5 H382.5 V238.5 H383.5 V238.5 H384.5 V237.5 V237.5 H385.5 V236.5 V236.5 H386.5 V235.5 V235.5 H387.5 V234.5 V234.5 H388.5 V233.5 V233.5 H389.5 V232.5 V232.5 H390.5 V231.5 V231.5 H391.5 V230.5 V230.5 H392.5 V229.5 V229.5 H393.5 V228.5 V228.5 H394.5 V227.5 V227.5 H395.5 V226.5 V226.5 H396.5 V225.5 V225.5 H397.5 V224.5 H398.5 V224.5 H399.5 V223.5 H400.5 V223.5 H401.5 V222.5 H402.5 V222.5 H403.5 V221.5 H404.5 H405.5 H406.5 H407.5 H408.5 H409.5 H410.5 H411.5 H412.5 H413.5 H414.5 H415.5 H416.5 H417.5 H418.5 H419.5 H420.5 H421.5 H422.5 H423.5 H424.5 H425.5 H426.5 H427.5 H428.5 H429.5 H430.5 H431.5 H432.5 H433.5 V221.5 H434.5 V222.5 V222.5 H435.5 V223.5 V223.5 H436.5 V224.5 H437.5 V224.5 H438.5 V225.5 H439.5 H440.5 H441.5 H442.5 H443.5 V225.5 H444.5 V226.5 H445.5 V226.5 H446.5 V227.5 V227.5 H447.5 V228.5 H448.5 V228.5 H449.5 V229.5 H450.5 V229.5 H451.5 V230.5 H452.5 V230.5 H453.5 V231.5 V231.5 H454.5 V232.5 H455.5 V232.5 H456.5 V233.5 H457.5 V233.5 H458.5 V234.5 H459.5 V234.5 H460.5 V235.5 H461.5 V235.5 H462.5 V236.5 H463.5 V236.5 H464.5 V237.5 H465.5 V237.5 H466.5 V238.5 H467.5 V238.5 H468.5 V239.5 H469.5 V239.5 H470.5 V240.5 H471.5 H472.5 V240.5 H473.5 V241.5 H474.5 H475.5 H476.5 V241.5 H477.5 V242.5 V243.5 H478.5 V244.5 H479.5 H480.5 H481.5 H482.5 H483.5 H484.5 H485.5 H486.5 H487.5 H488.5 H489.5 H490.5 H491.5 V244.5 H492.5 V245.5 V245.5 H493.5 V246.5 V246.5 H494.5 V247.5 V247.5 H495.5 V248.5 H496.5 H497.5 H498.5 H499.5 H500.5 H501.5 H502.5 H503.5 H504.5 H505.5 H506.5 H507.5 H508.5 H509.5 H510.5 H511.5 H512.5 H513.5 H514.5 H515.5 H516.5 H517.5 H518.5 H519.5 H520.5 V247.5 H521.5 V246.5 H522.5 V247.5 H523.5 V248.5 V247.5 H524.5 V246.5 H525.5 V247.5 H526.5 V248.5 H527.5 H528.5 H529.5 H530.5 V248.5 H531.5 V247.5 H532.5 H533.5 H534.5 V247.5 H535.5 V246.5 H536.5 H537.5 H538.5 V246.5 H539.5 V245.5 H540.5 H541.5 H542.5 V245.5 H543.5 V244.5 V243.5 H544.5 V242.5 H545.5 V243.5 H546.5 V244.5 V243.5 H547.5 V242.5 H548.5 V243.5 H549.5 V244.5 V243.5 H550.5 V241.5 H551.5 H552.5 H553.5 H554.5 H555.5 H556.5 V240.5 H557.5 V239.5 H558.5 V240.5 H559.5 V241.5 V240.5 H560.5 V239.5 H561.5 V240.5 H562.5 V241.5 V240.5 H563.5 V239.5 H564.5 V240.5 H565.5 V241.5 V240.5 H566.5 V239.5 H567.5 V240.5 H568.5 V241.5 H569.5 V241.5 H570.5 V240.5 V240.5 H571.5 V239.5 H572.5 V239.5 H573.5 V238.5 H574.5 V237.5 H575.5 V235.5 H576.5 V236.5 H577.5 V238.5 V237.5 H578.5 V235.5 H579.5 V236.5 H580.5 V238.5 V237.5 H581.5 V235.5 V236.5 H582.5 V238.5 H583.5 H584.5 V238.5 H585.5 V237.5 H586.5 H587.5 H588.5 H589.5 H590.5 H591.5 H592.5 V237.5 H593.5 V236.5 H594.5 H595.5 H596.5 H597.5 H598.5 H599.5 H600.5 V236.5 H601.5 V235.5 H602.5 H603.5 H604.5 H605.5 H606.5 H607.5 H608.5 V235.5 H609.5 V234.5 H610.5 H611.5 H612.5 H613.5 V235.5 H614.5 V236.5 H615.5 V235.5 H616.5 V234.5 V235.5 H617.5 V236.5 H618.5 V235.5 H619.5 V234.5 H620.5 H621.5 H622.5 V234.5 H623.5 V235.5 H624.5 H625.5 H626.5 H627.5 V235.5 H628.5 V236.5 H629.5 H630.5 H631.5 H632.5 V236.5 H633.5 V237.5 H634.5 H635.5 H636.5 H637.5 V237.5 H638.5 V238.5 H639.5 V239.5 H640.5 V240.5 H641.5 V239.5 H642.5 V238.5 V239.5 H643.5 V240.5 H644.5 V239.5 H645.5 V238.5 V239.5 H646.5 V240.5 H647.5 V239.5 H648.5 V238.5" fill="none" stroke="#f0f048" stroke-width="1" shape-rendering="crispEdges"/><g stroke="#ffff00" stroke-width="1" shape-rendering="crispEdges"><line x1="52.5" y1="60" x2="52.5" y2="421"/><line x1="209.5" y1="59" x2="209.5" y2="421"/></g></svg></div></div>
<div style="left:666px;top:52px;width:128px;height:122px;border:1px solid #ffffff;box-sizing:border-box"></div>
<div style="left:665px;top:51px;width:128px;height:122px;border:1px solid #9a98b2;box-sizing:border-box"></div>
<div class="t" style="left:671px;top:46px;padding:0 2px;background:#dad9a7;height:13px">Scale</div>
<div class="t" style="left:674px;top:61px;">Amplitude [V]</div>
<div style="left:674px;top:78px;width:91px;height:19px;background:#ffffff;box-shadow:inset 1px 1px 0 #9a98b2,inset 2px 2px 0 #404058,inset -1px -1px 0 #ffffff,inset -2px -2px 0 #ecebd4"></div>
<div class="t" style="left:677px;top:81px;">2400</div>
<div style="left:767px;top:78px;width:15px;height:9px;background:#dad9a7;box-shadow:inset 1px 1px 0 #ffffff,inset -1px -1px 0 #404058,inset -2px -2px 0 #9a98b2"></div>
<svg style="left:772px;top:81px" width="6" height="4"><path d="M1.5 3 L3 1.5 L4.5 3 Z" fill="#fff" stroke="#fff" stroke-width="1"/><path d="M0 3 L2.5 0.5 L5 3 Z" fill="#8c8aa8"/></svg>
<div style="left:767px;top:88px;width:15px;height:9px;background:#dad9a7;box-shadow:inset 1px 1px 0 #ffffff,inset -1px -1px 0 #404058,inset -2px -2px 0 #9a98b2"></div>
<svg style="left:772px;top:91px" width="6" height="4"><path d="M1.5 1 L3 2.5 L4.5 1 Z" fill="#fff" stroke="#fff" stroke-width="1"/><path d="M0 0.5 L2.5 3 L5 0.5 Z" fill="#8c8aa8"/></svg>
<div class="t" style="left:674px;top:101px;">Time base [µs]</div>
<div style="left:674px;top:117px;width:91px;height:19px;background:#ffffff;box-shadow:inset 1px 1px 0 #9a98b2,inset 2px 2px 0 #404058,inset -1px -1px 0 #ffffff,inset -2px -2px 0 #ecebd4"></div>
<div class="t" style="left:677px;top:120px;">300</div>
<div style="left:767px;top:117px;width:15px;height:9px;background:#dad9a7;box-shadow:inset 1px 1px 0 #ffffff,inset -1px -1px 0 #404058,inset -2px -2px 0 #9a98b2"></div>
<svg style="left:772px;top:120px" width="6" height="4"><path d="M1.5 3 L3 1.5 L4.5 3 Z" fill="#fff" stroke="#fff" stroke-width="1"/><path d="M0 3 L2.5 0.5 L5 3 Z" fill="#8c8aa8"/></svg>
<div style="left:767px;top:127px;width:15px;height:9px;background:#dad9a7;box-shadow:inset 1px 1px 0 #ffffff,inset -1px -1px 0 #404058,inset -2px -2px 0 #9a98b2"></div>
<svg style="left:772px;top:130px" width="6" height="4"><path d="M1.5 1 L3 2.5 L4.5 1 Z" fill="#fff" stroke="#fff" stroke-width="1"/><path d="M0 0.5 L2.5 3 L5 0.5 Z" fill="#8c8aa8"/></svg>
<div style="left:674px;top:144px;width:13px;height:13px;background:#ffffff;box-shadow:inset 1px 1px 0 #9a98b2,inset 2px 2px 0 #404058,inset -1px -1px 0 #ffffff,inset -2px -2px 0 #ecebd4"></div>
<div class="t" style="left:692px;top:142px;">Auto scale</div>
<div style="left:666px;top:313px;width:128px;height:137px;border:1px solid #ffffff;box-sizing:border-box"></div>
<div style="left:665px;top:312px;width:128px;height:137px;border:1px solid #9a98b2;box-sizing:border-box"></div>
<div class="t" style="left:672px;top:307px;padding:0 2px;background:#dad9a7;height:13px">Test step 2</div>
<div style="left:673px;top:321px;width:111px;height:25px;background:#dad9a7;box-shadow:inset 1px 1px 0 #ffffff,inset -1px -1px 0 #404058,inset -2px -2px 0 #9a98b2"></div>
<div class="tc" style="left:673px;top:321px;width:111px;height:25px;line-height:25px;color:#000">Exit</div>
<div style="left:673px;top:353px;width:111px;height:25px;background:#dad9a7;box-shadow:inset 1px 1px 0 #ffffff,inset -1px -1px 0 #404058,inset -2px -2px 0 #9a98b2"></div>
<div class="tc" style="left:673px;top:353px;width:111px;height:25px;line-height:25px;color:#000">Test steps</div>
<div style="left:8px;top:461px;width:650px;height:158px;border:1px solid #ffffff;box-sizing:border-box"></div>
<div style="left:7px;top:460px;width:650px;height:158px;border:1px solid #9a98b2;box-sizing:border-box"></div>
<div class="t" style="left:14px;top:455px;padding:0 2px;background:#dad9a7;height:13px">Evaluation</div>
<div class="t" style="left:13px;top:473px;">EAR</div>
<div style="left:11px;top:492px;width:188px;height:1px;background:#9a98b2;"></div>
<div style="left:11px;top:493px;width:188px;height:1px;background:#ffffff;"></div>
<div style="left:99px;top:471px;width:79px;height:19px;background:#ffffff;box-shadow:inset 1px 1px 0 #9a98b2,inset 2px 2px 0 #404058,inset -1px -1px 0 #ffffff,inset -2px -2px 0 #ecebd4"></div>
<div class="t" style="left:103px;top:474px;">10%</div>
<div style="left:178px;top:471px;width:17px;height:9px;background:#dad9a7;box-shadow:inset 1px 1px 0 #ffffff,inset -1px -1px 0 #404058,inset -2px -2px 0 #9a98b2"></div>
<svg style="left:184px;top:474px" width="6" height="4"><path d="M0 3 L2.5 0.5 L5 3 Z" fill="#000"/></svg>
<div style="left:178px;top:481px;width:17px;height:9px;background:#dad9a7;box-shadow:inset 1px 1px 0 #ffffff,inset -1px -1px 0 #404058,inset -2px -2px 0 #9a98b2"></div>
<svg style="left:184px;top:484px" width="6" height="4"><path d="M0 0.5 L2.5 3 L5 0.5 Z" fill="#000"/></svg>
<div style="left:199px;top:469px;width:105px;height:24px;background:#000;box-shadow:inset 1px 1px 0 #9a98b2,inset 2px 2px 0 #404058,inset -1px -1px 0 #ffffff,inset -2px -2px 0 #ecebd4"></div>
<div class="t" style="left:201px;top:473px;color:#f00000;font-size:14px;line-height:16px;transform:none">62.9%</div>
<div class="t" style="left:325px;top:470px;">Voltage from:</div>
<div style="left:413px;top:468px;width:55px;height:20px;background:#ffffff;box-shadow:inset 1px 1px 0 #9a98b2,inset 2px 2px 0 #404058,inset -1px -1px 0 #ffffff,inset -2px -2px 0 #ecebd4"></div>
<div class="t" style="left:417px;top:471px;font-size:13px;line-height:16px;letter-spacing:3.6px;transform:scaleX(0.72);transform-origin:left top">5000V</div>
<div style="left:468px;top:468px;width:15px;height:9px;background:#dad9a7;box-shadow:inset 1px 1px 0 #ffffff,inset -1px -1px 0 #404058,inset -2px -2px 0 #9a98b2"></div>
<svg style="left:473px;top:471px" width="6" height="4"><path d="M0 3 L2.5 0.5 L5 3 Z" fill="#000"/></svg>
<div style="left:468px;top:479px;width:15px;height:9px;background:#dad9a7;box-shadow:inset 1px 1px 0 #ffffff,inset -1px -1px 0 #404058,inset -2px -2px 0 #9a98b2"></div>
<svg style="left:473px;top:482px" width="6" height="4"><path d="M0 0.5 L2.5 3 L5 0.5 Z" fill="#000"/></svg>
<div class="t" style="left:325px;top:494px;">Voltage to:</div>
<div style="left:413px;top:492px;width:55px;height:20px;background:#ffffff;box-shadow:inset 1px 1px 0 #9a98b2,inset 2px 2px 0 #404058,inset -1px -1px 0 #ffffff,inset -2px -2px 0 #ecebd4"></div>
<div style="left:416px;top:495px;width:41px;height:13px;background:#0a246a;"></div>
<div class="t" style="left:417px;top:495px;font-size:13px;line-height:16px;color:#fff;letter-spacing:3.6px;transform:scaleX(0.72);transform-origin:left top">5000V</div>
<div style="left:468px;top:492px;width:15px;height:9px;background:#dad9a7;box-shadow:inset 1px 1px 0 #ffffff,inset -1px -1px 0 #404058,inset -2px -2px 0 #9a98b2"></div>
<svg style="left:473px;top:495px" width="6" height="4"><path d="M0 3 L2.5 0.5 L5 3 Z" fill="#000"/></svg>
<div style="left:468px;top:503px;width:15px;height:9px;background:#dad9a7;box-shadow:inset 1px 1px 0 #ffffff,inset -1px -1px 0 #404058,inset -2px -2px 0 #9a98b2"></div>
<svg style="left:473px;top:506px" width="6" height="4"><path d="M0 0.5 L2.5 3 L5 0.5 Z" fill="#000"/></svg>
<div class="t" style="left:325px;top:519px;color:#9090b4;transform:scaleX(0.91)">Volt/step:</div>
<div style="left:413px;top:516px;width:55px;height:21px;background:#ffffff;box-shadow:inset 1px 1px 0 #9a98b2,inset 2px 2px 0 #404058,inset -1px -1px 0 #ffffff,inset -2px -2px 0 #ecebd4"></div>
<div class="t" style="left:417px;top:519px;font-size:13px;line-height:16px;color:#9090b4;letter-spacing:3.6px;transform:scaleX(0.72);transform-origin:left top">0V</div>
<div style="left:468px;top:516px;width:15px;height:10px;background:#dad9a7;box-shadow:inset 1px 1px 0 #ffffff,inset -1px -1px 0 #404058,inset -2px -2px 0 #9a98b2"></div>
<svg style="left:473px;top:519px" width="6" height="4"><path d="M1.5 3 L3 1.5 L4.5 3 Z" fill="#fff" stroke="#fff" stroke-width="1"/><path d="M0 3 L2.5 0.5 L5 3 Z" fill="#8c8aa8"/></svg>
<div style="left:468px;top:527px;width:15px;height:10px;background:#dad9a7;box-shadow:inset 1px 1px 0 #ffffff,inset -1px -1px 0 #404058,inset -2px -2px 0 #9a98b2"></div>
<svg style="left:473px;top:530px" width="6" height="4"><path d="M1.5 1 L3 2.5 L4.5 1 Z" fill="#fff" stroke="#fff" stroke-width="1"/><path d="M0 0.5 L2.5 3 L5 0.5 Z" fill="#8c8aa8"/></svg>
<div class="t" style="left:328px;top:541px;color:#ffffff;transform:scaleX(0.89)">Variable voltage steps</div>
<div class="t" style="left:327px;top:540px;color:#9c9ab8;transform:scaleX(0.89)">Variable voltage steps</div>
<div style="left:469px;top:541px;width:13px;height:13px;background:#dad9a7;box-shadow:inset 1px 1px 0 #9a98b2,inset 2px 2px 0 #404058,inset -1px -1px 0 #ffffff,inset -2px -2px 0 #ecebd4"></div>
<div class="t" style="left:325px;top:562px;">Pulses:</div>
<div style="left:413px;top:559px;width:55px;height:21px;background:#ffffff;box-shadow:inset 1px 1px 0 #9a98b2,inset 2px 2px 0 #404058,inset -1px -1px 0 #ffffff,inset -2px -2px 0 #ecebd4"></div>
<div class="t" style="left:416px;top:562px;">1</div>
<div style="left:468px;top:559px;width:15px;height:10px;background:#dad9a7;box-shadow:inset 1px 1px 0 #ffffff,inset -1px -1px 0 #404058,inset -2px -2px 0 #9a98b2"></div>
<svg style="left:473px;top:562px" width="6" height="4"><path d="M0 3 L2.5 0.5 L5 3 Z" fill="#000"/></svg>
<div style="left:468px;top:570px;width:15px;height:10px;background:#dad9a7;box-shadow:inset 1px 1px 0 #ffffff,inset -1px -1px 0 #404058,inset -2px -2px 0 #9a98b2"></div>
<svg style="left:473px;top:573px" width="6" height="4"><path d="M0 0.5 L2.5 3 L5 0.5 Z" fill="#000"/></svg>
<div style="left:11px;top:594px;width:93px;height:21px;background:#dad9a7;box-shadow:inset 1px 1px 0 #ffffff,inset -1px -1px 0 #404058,inset -2px -2px 0 #9a98b2"></div>
<div class="tc" style="left:11px;top:594px;width:93px;height:21px;line-height:21px;color:#000">Result</div>
<div style="left:115px;top:594px;width:93px;height:21px;background:#dad9a7;box-shadow:inset 1px 1px 0 #ffffff,inset -1px -1px 0 #404058,inset -2px -2px 0 #9a98b2"></div>
<div class="tc" style="left:115px;top:594px;width:93px;height:21px;line-height:21px;color:#000">Advanced</div>
<div style="left:215px;top:591px;width:105px;height:24px;background:#ff0000;box-shadow:inset 1px 1px 0 #9a98b2,inset 2px 2px 0 #404058,inset -1px -1px 0 #ffffff,inset -2px -2px 0 #ecebd4"></div>
<div class="t" style="left:215px;top:595px;width:105px;text-align:center;font-size:16px;line-height:18px;transform:none">4906V</div>
<div style="left:666px;top:461px;width:128px;height:158px;border:1px solid #ffffff;box-sizing:border-box"></div>
<div style="left:665px;top:460px;width:128px;height:158px;border:1px solid #9a98b2;box-sizing:border-box"></div>
<div class="t" style="left:672px;top:455px;padding:0 2px;background:#dad9a7;height:13px">Test</div>
<div style="left:673px;top:474px;width:111px;height:25px;background:#dad9a7;box-shadow:inset 1px 1px 0 #ffffff,inset -1px -1px 0 #404058,inset -2px -2px 0 #9a98b2"></div>
<div class="tc" style="left:673px;top:474px;width:111px;height:25px;line-height:25px;color:#000">Start</div>
<div style="left:673px;top:506px;width:111px;height:25px;background:#dad9a7;box-shadow:inset 1px 1px 0 #ffffff,inset -1px -1px 0 #404058,inset -2px -2px 0 #9a98b2"></div>
<div class="tc" style="left:674px;top:507px;width:111px;height:25px;line-height:25px;color:#ffffff;transform:scaleX(0.91)">Save reference</div>
<div class="tc" style="left:673px;top:506px;width:111px;height:25px;line-height:25px;color:#9c9ab8;transform:scaleX(0.91)">Save reference</div>
<div style="left:673px;top:538px;width:111px;height:25px;background:#dad9a7;box-shadow:inset 1px 1px 0 #ffffff,inset -1px -1px 0 #404058,inset -2px -2px 0 #9a98b2"></div>
<div class="tc" style="left:674px;top:539px;width:111px;height:25px;line-height:25px;color:#ffffff;transform:scaleX(0.91)">Delete reference</div>
<div class="tc" style="left:673px;top:538px;width:111px;height:25px;line-height:25px;color:#9c9ab8;transform:scaleX(0.91)">Delete reference</div>
<div style="left:673px;top:570px;width:111px;height:25px;background:#dad9a7;box-shadow:inset 1px 1px 0 #ffffff,inset -1px -1px 0 #404058,inset -2px -2px 0 #9a98b2"></div>
<div class="tc" style="left:673px;top:570px;width:111px;height:25px;line-height:25px;color:#000">Connections</div>
<div style="left:673px;top:601px;width:13px;height:13px;background:#ffffff;box-shadow:inset 1px 1px 0 #9a98b2,inset 2px 2px 0 #404058,inset -1px -1px 0 #ffffff,inset -2px -2px 0 #ecebd4"></div>
<div class="t" style="left:691px;top:600px;">Cancel if no go</div>
<div style="left:688px;top:496px;width:94px;height:17px;background:#ffffff;border:1px solid #000;box-sizing:border-box"></div>
<div class="t" style="left:689px;top:498px;font-size:11px;transform:none">Starts a surge test</div>
<svg style="left:719px;top:474px" width="13" height="21" viewBox="0 0 13 21"><path d="M0.5 0.5 V16.5 L4.5 12.5 L7.5 19.5 L9.5 18.5 L6.5 11.5 H11.5 Z" fill="#fff" stroke="#000" stroke-width="1"/></svg>
<div style="left:0;top:624px;width:254px;height:9px;background:linear-gradient(#d8d8d8,#e2e2e2 4px,#e8e8e8)"></div>
<div style="left:254px;top:624px;width:551px;height:9px;background:linear-gradient(#dcdcdc,#f4f4f4 3px,#fbfbfb)"></div>
<div style="left:10px;top:623px;width:48px;height:10px;background:#1478dc;overflow:hidden"><div style="position:absolute;left:0px;top:1px;width:48px;height:48px;border-radius:50%;background:#f6f6f6"></div><svg style="position:absolute;left:0;top:0" width="48" height="10"><path d="M19 6.5 L10 14 L19 14 Z M29 6.5 L38 14 L29 14 Z" fill="#1478dc"/></svg></div>
<div style="left:70px;top:624px;font-size:25px;color:#1478dc;font-family:'Liberation Sans',sans-serif;height:9px;overflow:hidden;line-height:25px">TeamViewer</div>
<div style="left:275px;top:623px;width:17px;height:2px;background:#1478dc;"></div>
<div style="left:303px;top:623px;font-size:12px;color:#666;font-family:'Liberation Sans',sans-serif;height:2px;overflow:hidden;line-height:14px;white-space:nowrap">DSFI 5000V DYNAMIC &nbsp; Recorded Profile</div>
</body></html>
